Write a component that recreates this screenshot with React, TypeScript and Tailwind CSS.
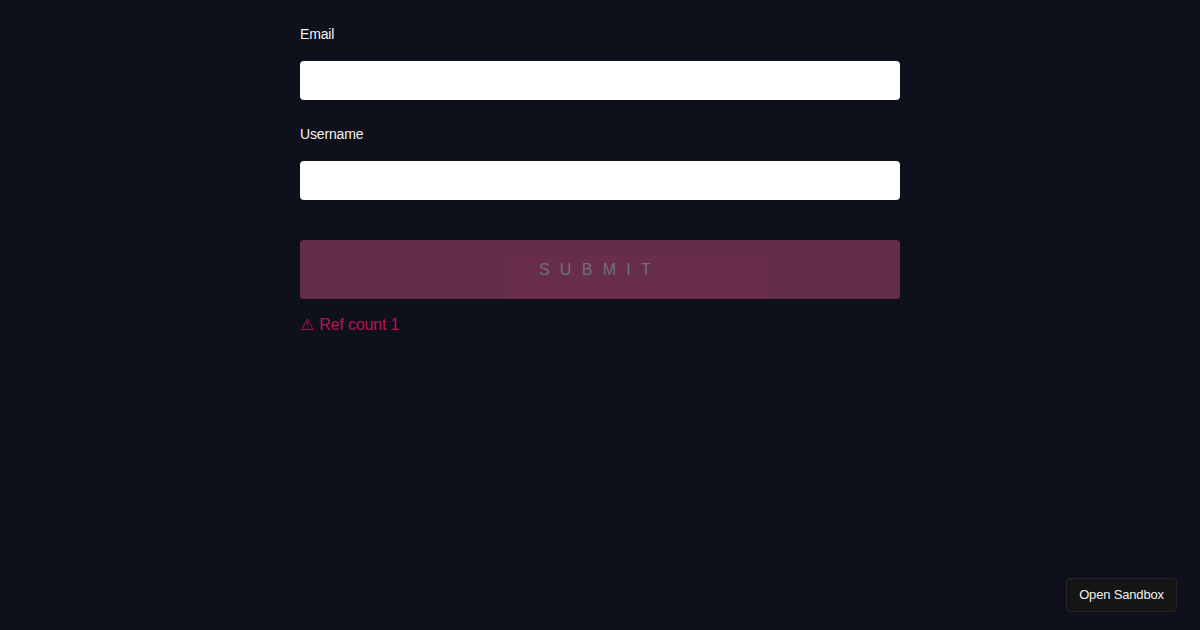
import React from "react";

const fontStack = "font-['Liberation_Sans',Arial,sans-serif]";

const Field: React.FC<{ label: string; id: string }> = ({ label, id }) => (
  <div className="flex flex-col">
    <label htmlFor={id} className="block mt-[20px] mb-[13px] text-[14px] leading-[28px] tracking-[-0.15px] font-normal text-[#f4f4f4]">
      {label}
    </label>
    <input id={id} type="text" className="block w-full h-[39px] rounded-[4px] bg-white border-0 outline-none px-[15px] text-[14px] text-black" />
  </div>
);

export default function App() {
  return (
    <div className={`relative h-[630px] w-full overflow-hidden bg-[#0e101c] ${fontStack}`}>
      <form className="mx-auto w-[600px] flex flex-col" onSubmit={(e) => e.preventDefault()}>
        <Field label="Email" id="email" />
        <Field label="Username" id="username" />
        <button
          type="button"
          disabled
          className={`mt-[40px] h-[59px] w-full rounded-[4px] bg-[#ec5990] opacity-40 text-[16px] font-normal tracking-[10.3px] uppercase text-white ${fontStack}`}
        >
          Submit
        </button>
        <p className="mt-[14px] text-[16px] leading-[24px] tracking-[-0.15px] text-[#b8174d]">
          <span className="mr-[1px]">⚠</span> Ref count 1
        </p>
      </form>
      <button
        type="button"
        className={`absolute right-[23px] bottom-[18px] h-[34px] w-[111px] rounded-[4px] border border-[#2b2527] bg-[#151515] text-[13px] tracking-[-0.17px] text-[#f0f0f0] ${fontStack}`}
      >
        Open Sandbox
      </button>
    </div>
  );
}
